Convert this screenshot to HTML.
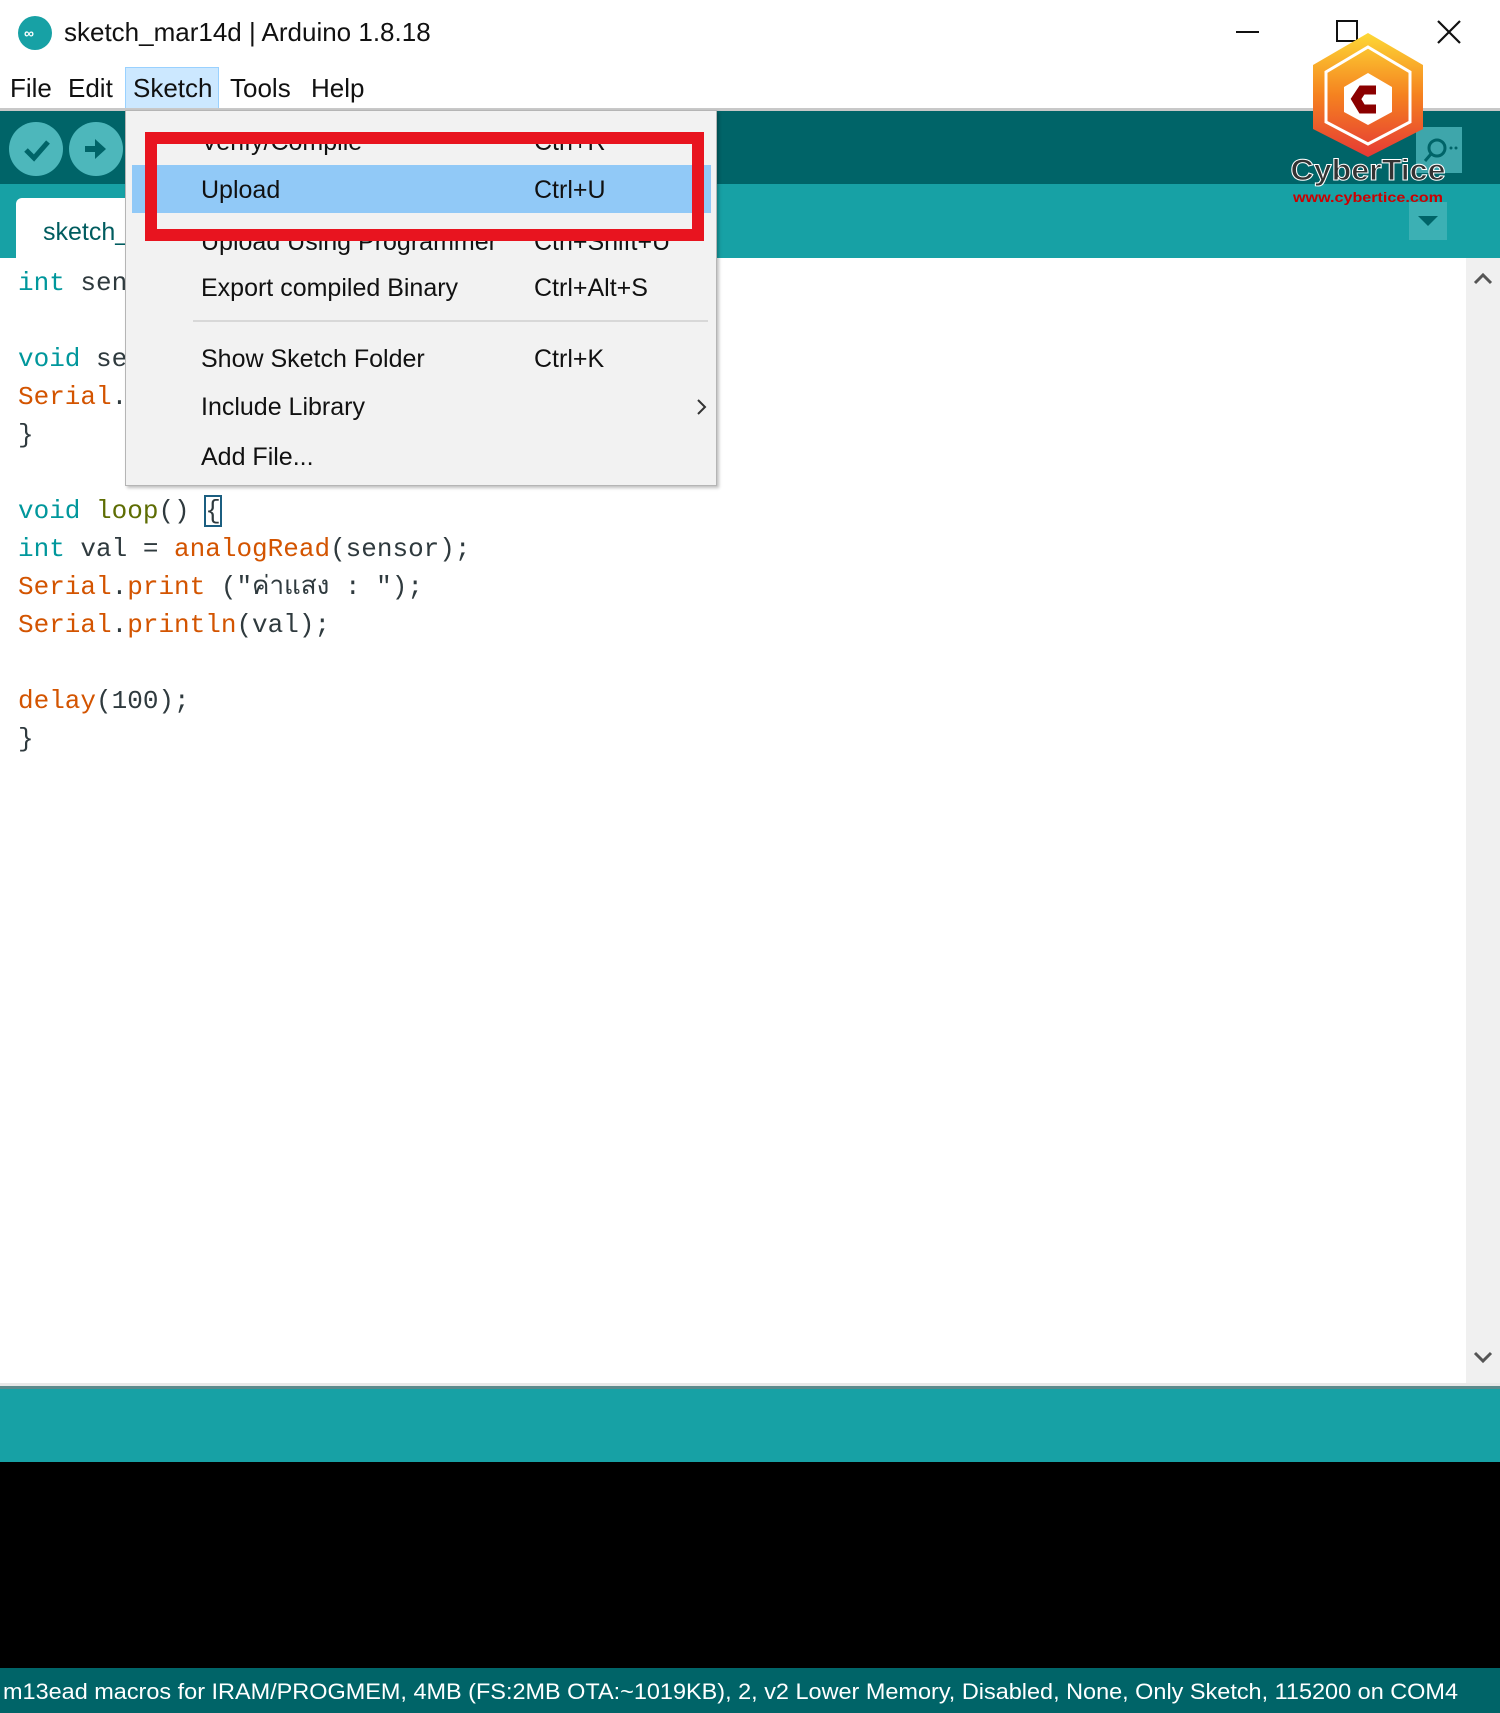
<!DOCTYPE html>
<html><head><meta charset="utf-8"><style>
*{margin:0;padding:0;box-sizing:border-box}
body{width:1500px;height:1713px;position:relative;overflow:hidden;background:#fff;font-family:"Liberation Sans",sans-serif}
.a{position:absolute}
.mono{font-family:"Liberation Mono",monospace;font-size:26px;white-space:pre;color:#2f3a3e}
.kw{color:#00979c}.fn{color:#d35400}.lp{color:#5e6d03}
.mi{position:absolute;left:201px;font-size:25px;color:#111;white-space:nowrap}
.sc{position:absolute;left:534px;font-size:25px;color:#111;white-space:nowrap}
</style></head><body>
<!-- title bar -->
<div class="a" style="left:18px;top:16px;width:34px;height:34px;border-radius:50%;background:#17a1a5"></div>
<div class="a" style="left:24px;top:25px;color:#fff;font-size:14px;font-weight:bold">∞</div>
<div class="a" style="left:64px;top:17px;font-size:26px;color:#111">sketch_mar14d | Arduino 1.8.18</div>
<div class="a" style="left:1236px;top:31px;width:23px;height:2px;background:#111"></div>
<div class="a" style="left:1336px;top:20px;width:22px;height:22px;border:2px solid #111"></div>
<svg class="a" style="left:1436px;top:19px" width="26" height="26"><path d="M2 2L24 24M24 2L2 24" stroke="#111" stroke-width="2.2"/></svg>
<!-- menu bar -->
<div class="a" style="left:125px;top:67px;width:94px;height:43px;background:#cce8ff;border:1px solid #99d1ff"></div>
<div class="a" style="left:10px;top:73px;font-size:26px;color:#111">File</div>
<div class="a" style="left:68px;top:73px;font-size:26px;color:#111">Edit</div>
<div class="a" style="left:133px;top:73px;font-size:26px;color:#111">Sketch</div>
<div class="a" style="left:230px;top:73px;font-size:26px;color:#111">Tools</div>
<div class="a" style="left:311px;top:73px;font-size:26px;color:#111">Help</div>
<div class="a" style="left:0;top:108px;width:1500px;height:3px;background:#c8c8c8"></div>
<!-- toolbar -->
<div class="a" style="left:0;top:111px;width:1500px;height:73px;background:#006468"></div>
<div class="a" style="left:9px;top:122px;width:54px;height:54px;border-radius:50%;background:#4db7bb"></div>
<div class="a" style="left:69px;top:122px;width:54px;height:54px;border-radius:50%;background:#4db7bb"></div>
<svg class="a" style="left:22px;top:136px" width="30" height="28"><path d="M4 14L12 22L26 6" stroke="#006468" stroke-width="5" fill="none"/></svg>
<svg class="a" style="left:80px;top:134px" width="32" height="30"><path d="M5 15H20" stroke="#006468" stroke-width="6"/><path d="M15 5L26 15L15 25Z" fill="#006468"/></svg>
<div class="a" style="left:1416px;top:127px;width:46px;height:46px;background:#4db7bb;opacity:.8"></div>
<svg class="a" style="left:1420px;top:133px" width="40" height="34"><circle cx="17" cy="15" r="8" stroke="#006468" stroke-width="3" fill="none"/><path d="M11 21L5 28" stroke="#006468" stroke-width="3"/><circle cx="31" cy="15" r="1.5" fill="#006468"/><circle cx="36" cy="15" r="1.5" fill="#006468"/></svg>
<!-- tab row -->
<div class="a" style="left:0;top:184px;width:1500px;height:74px;background:#17a1a5"></div>
<div class="a" style="left:16px;top:198px;width:120px;height:60px;background:#fff;border-radius:6px 6px 0 0"></div>
<div class="a" style="left:43px;top:218px;font-size:25px;color:#005c5f">sketch_mar14d</div>
<div class="a" style="left:1409px;top:202px;width:38px;height:38px;background:#4db7bb;opacity:.7"></div>
<svg class="a" style="left:1416px;top:214px" width="24" height="14"><path d="M2 2H22L12 12Z" fill="#006468"/></svg>
<!-- editor -->
<div class="a" style="left:1466px;top:258px;width:34px;height:1127px;background:#f0f0f0"></div>
<svg class="a" style="left:1472px;top:270px" width="22" height="16"><path d="M3 13L11 5L19 13" stroke="#555" stroke-width="3" fill="none"/></svg>
<svg class="a" style="left:1472px;top:1350px" width="22" height="16"><path d="M3 3L11 11L19 3" stroke="#555" stroke-width="3" fill="none"/></svg>
<div class="a mono" style="left:18px;top:264px;line-height:38px"><span class="kw">int</span> sensor = A0;

<span class="kw">void</span> setup() {
<span class="fn">Serial</span>.begin(9600);
}

<span class="kw">void</span> <span class="lp">loop</span>() <span style="outline:2px solid #1b5e80;outline-offset:-1px">{</span>
<span class="kw">int</span> val = <span class="fn">analogRead</span>(sensor);
<span class="fn">Serial</span>.<span class="fn">print</span> ("ค่าแสง : ");
<span class="fn">Serial</span>.<span class="fn">println</span>(val);

<span class="fn">delay</span>(100);
}</div>
<!-- bottom -->
<div class="a" style="left:0;top:1383px;width:1500px;height:3px;background:#e8e8e8"></div>
<div class="a" style="left:0;top:1386px;width:1500px;height:3px;background:#5b8a8c"></div>
<div class="a" style="left:0;top:1389px;width:1500px;height:73px;background:#17a1a5"></div>
<div class="a" style="left:0;top:1462px;width:1500px;height:206px;background:#000"></div>
<div class="a" style="left:0;top:1668px;width:1500px;height:45px;background:#006468"></div>
<svg class="a" style="left:0;top:1668px" width="1500" height="45"><text x="3" y="31" font-family="Liberation Sans,sans-serif" font-size="22" fill="#fff" textLength="1455" lengthAdjust="spacingAndGlyphs">m13ead macros for IRAM/PROGMEM, 4MB (FS:2MB OTA:~1019KB), 2, v2 Lower Memory, Disabled, None, Only Sketch, 115200 on COM4</text></svg>
<!-- dropdown menu -->
<div class="a" style="left:125px;top:110px;width:592px;height:376px;background:#f2f2f2;border:1px solid #b5b5b5;box-shadow:2px 2px 3px rgba(0,0,0,.25)"></div>
<div class="a" style="left:132px;top:165px;width:579px;height:48px;background:#91c9f7"></div>
<div class="mi" style="top:128px">Verify/Compile</div><div class="sc" style="top:128px">Ctrl+R</div>
<div class="mi" style="top:176px">Upload</div><div class="sc" style="top:176px">Ctrl+U</div>
<div class="mi" style="top:228px">Upload Using Programmer</div><div class="sc" style="top:228px">Ctrl+Shift+U</div>
<div class="mi" style="top:274px">Export compiled Binary</div><div class="sc" style="top:274px">Ctrl+Alt+S</div>
<div class="a" style="left:193px;top:320px;width:515px;height:2px;background:#d8d8d8"></div>
<div class="mi" style="top:345px">Show Sketch Folder</div><div class="sc" style="top:345px">Ctrl+K</div>
<div class="mi" style="top:393px">Include Library</div>
<svg class="a" style="left:696px;top:398px" width="12" height="18"><path d="M2 2L9 9L2 16" stroke="#333" stroke-width="2" fill="none"/></svg>
<div class="mi" style="top:443px">Add File...</div>
<!-- red box -->
<div class="a" style="left:145px;top:132px;width:559px;height:109px;border:12px solid #e8141f"></div>
<!-- logo -->
<svg class="a" style="left:1285px;top:30px" width="170" height="190">
<defs><linearGradient id="g" x1="0" y1="0" x2="0" y2="1"><stop offset="0" stop-color="#fdd835"/><stop offset=".5" stop-color="#f58220"/><stop offset="1" stop-color="#e53935"/></linearGradient></defs>
<path d="M83 3L138 35V99L83 127L28 99V35Z" fill="url(#g)"/>
<path d="M83 17L125 42V92L83 114L41 92V42Z" fill="none" stroke="#fff" stroke-width="3"/>
<path d="M83 43L107 57V82L83 95L59 82V57Z" fill="#fff"/>
<path d="M91 60H77L71 69L77 79H91" stroke="#8b0000" stroke-width="9" fill="none"/>
<text x="83" y="150" text-anchor="middle" font-family="Liberation Sans,sans-serif" font-weight="bold" font-size="30" fill="#333" stroke="#fff" stroke-width="1" textLength="155" lengthAdjust="spacingAndGlyphs">CyberTice</text>
<text x="83" y="172" text-anchor="middle" font-family="Liberation Sans,sans-serif" font-weight="bold" font-size="14" fill="#c00" textLength="150" lengthAdjust="spacingAndGlyphs">www.cybertice.com</text>
</svg>
</body></html>
